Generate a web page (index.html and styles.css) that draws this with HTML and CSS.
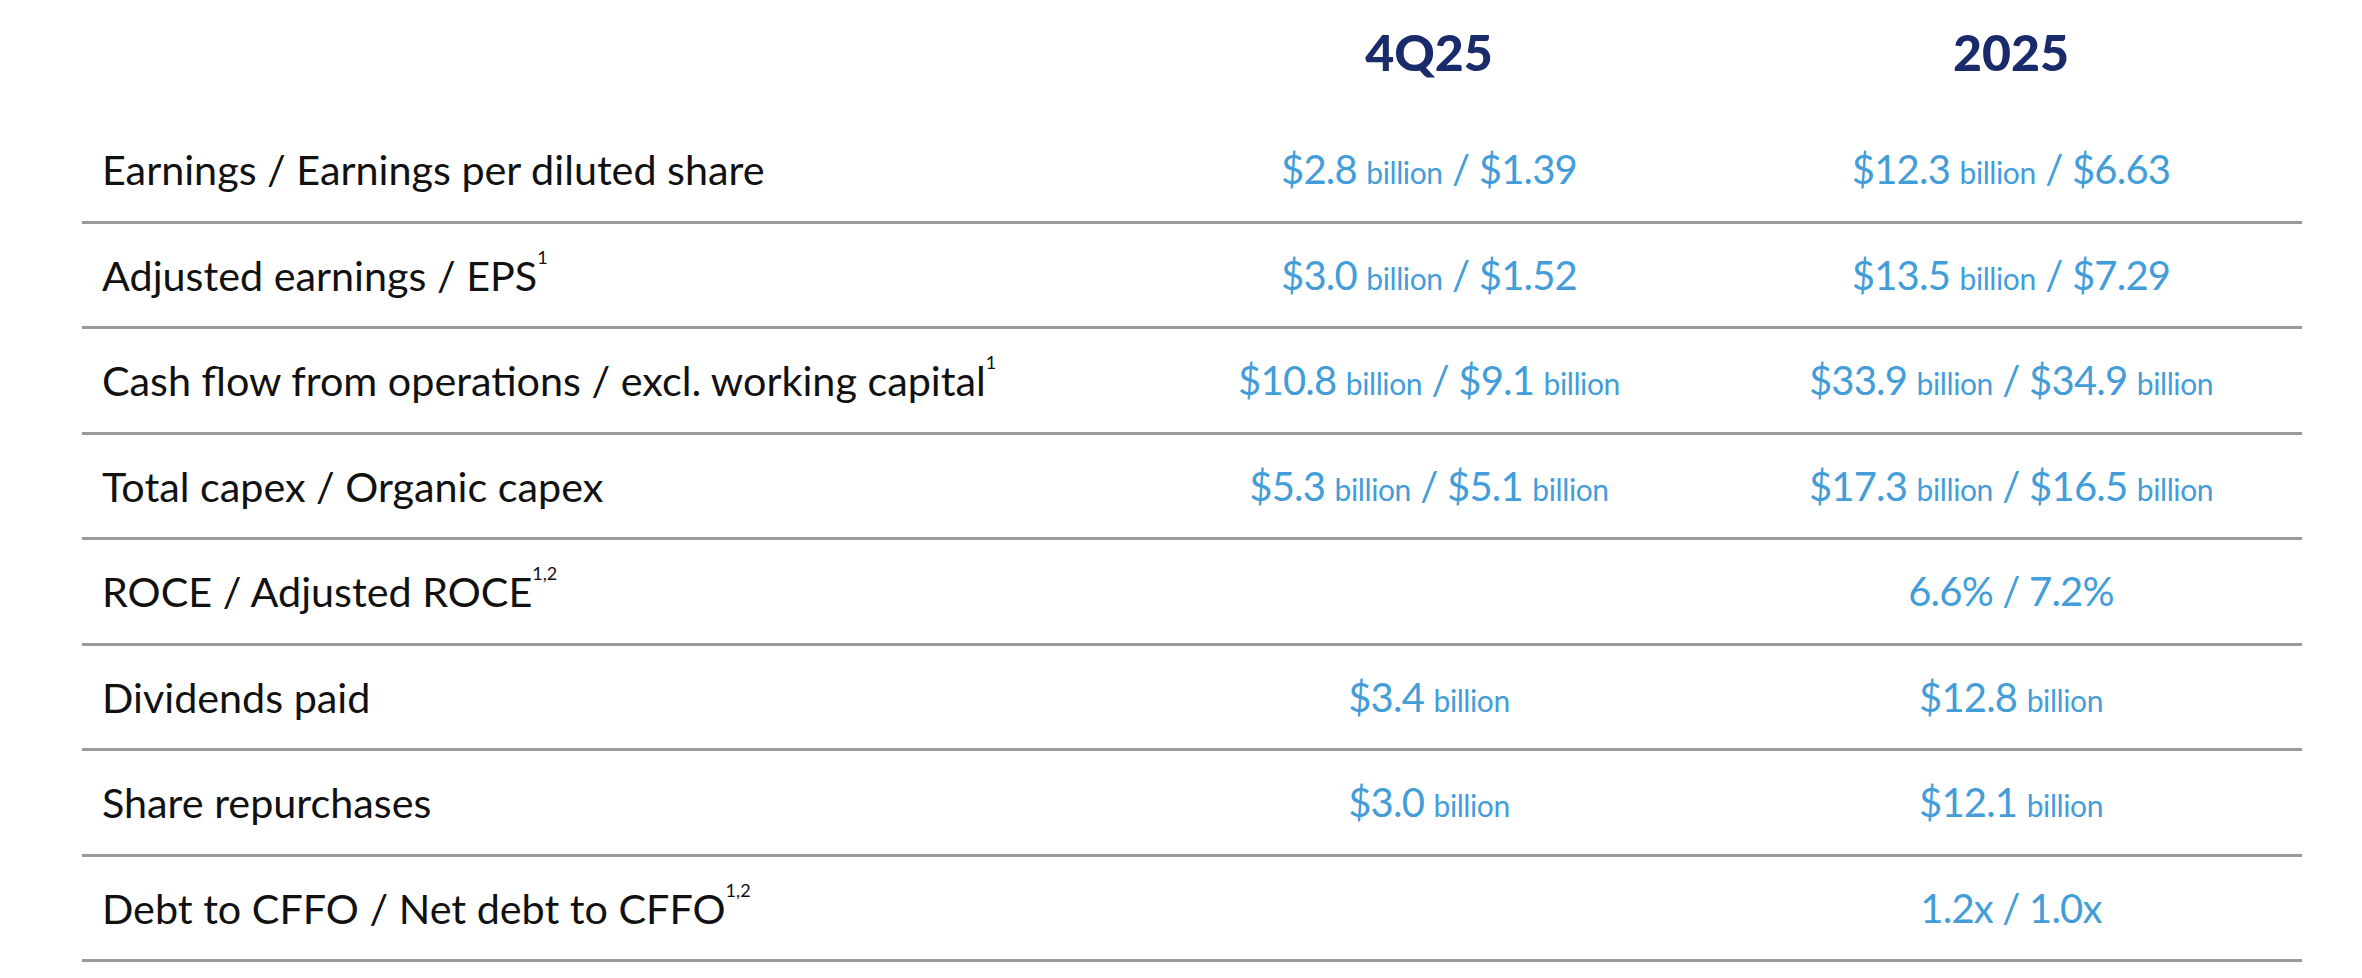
FILE: index.html
```html
<!DOCTYPE html>
<html>
<head>
    <title>Financial highlights</title>
    <meta name="viewport" content="width=device-width, initial-scale=1">
    <link rel="stylesheet" href="styles.css">
</head>
<body>

  <div class="highlights">
    <div class="row head">
      <div></div>
      <div class="period">4Q25</div>
      <div class="period">2025</div>
    </div>

    <div class="row">
      <div class="label">Earnings / Earnings per diluted share</div>
      <div class="val">$2.8 <small>billion</small> / $1.39</div>
      <div class="val">$12.3 <small>billion</small> / $6.63</div>
    </div>

    <div class="row">
      <div class="label">Adjusted earnings / EPS<sup>1</sup></div>
      <div class="val">$3.0 <small>billion</small> / $1.52</div>
      <div class="val">$13.5 <small>billion</small> / $7.29</div>
    </div>

    <div class="row">
      <div class="label">Cash flow from operations / excl. working capital<sup>1</sup></div>
      <div class="val">$10.8 <small>billion</small> / $9.1 <small>billion</small></div>
      <div class="val">$33.9 <small>billion</small> / $34.9 <small>billion</small></div>
    </div>

    <div class="row">
      <div class="label">Total capex / Organic capex</div>
      <div class="val">$5.3 <small>billion</small> / $5.1 <small>billion</small></div>
      <div class="val">$17.3 <small>billion</small> / $16.5 <small>billion</small></div>
    </div>

    <div class="row">
      <div class="label">ROCE / Adjusted ROCE<sup>1,2</sup></div>
      <div class="val"></div>
      <div class="val">6.6% / 7.2%</div>
    </div>

    <div class="row">
      <div class="label">Dividends paid</div>
      <div class="val">$3.4 <small>billion</small></div>
      <div class="val">$12.8 <small>billion</small></div>
    </div>

    <div class="row">
      <div class="label">Share repurchases</div>
      <div class="val">$3.0 <small>billion</small></div>
      <div class="val">$12.1 <small>billion</small></div>
    </div>

    <div class="row">
      <div class="label">Debt to CFFO / Net debt to CFFO<sup>1,2</sup></div>
      <div class="val"></div>
      <div class="val">1.2x / 1.0x</div>
    </div>
  </div>

</body>
</html>
```

FILE: styles.css
```css
html, body {
  padding: 0;
  margin: 0;
  background: white;
}

body {
  font-family: Lato, "Open Sans", sans-serif;
}

.highlights {
  width: 2220px;
  margin-left: 82px;
}

.row {
  display: grid;
  grid-template-columns: 1fr 582px 582px;
  align-items: center;
  height: 102.5px;
  border-bottom: 3px solid #9a9a9e;
}

.row.head {
  height: 118px;
  align-items: start;
  border-bottom: none;
}

.period {
  margin-top: 22px;
  text-align: center;
  font-size: 50px;
  line-height: 60px;
  font-weight: 900;
  color: #1a2b6b;
}

.label {
  padding-left: 20px;
  font-size: 41.3px;
  color: #111;
}

.label sup {
  font-size: 18px;
  vertical-align: top;
  position: relative;
  top: -4px;
}

.val {
  text-align: center;
  font-size: 40px;
  letter-spacing: -0.8px;
  color: #429dd8;
}

.val small {
  font-size: 30px;
  letter-spacing: -0.4px;
}
```
